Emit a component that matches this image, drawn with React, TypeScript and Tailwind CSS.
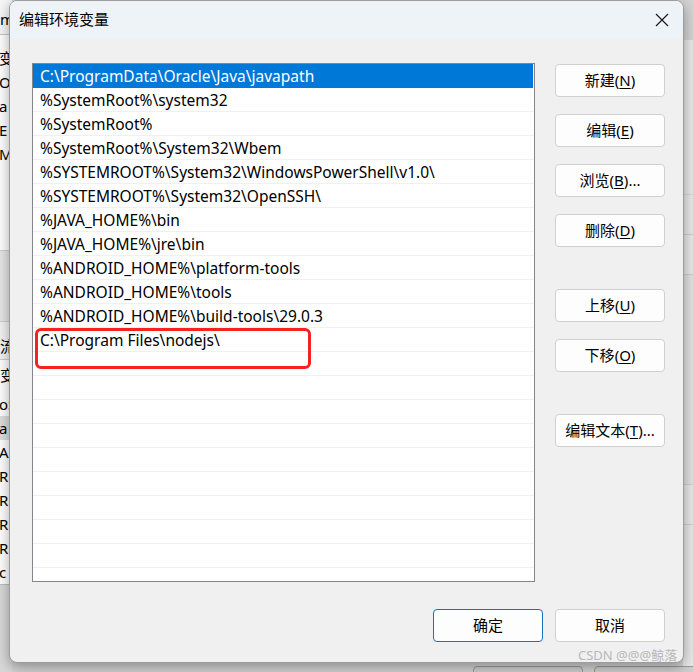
const FONT = '"Noto Sans", "Noto Sans CJK SC", sans-serif';

const paths = [
  "C:\\ProgramData\\Oracle\\Java\\javapath",
  "%SystemRoot%\\system32",
  "%SystemRoot%",
  "%SystemRoot%\\System32\\Wbem",
  "%SYSTEMROOT%\\System32\\WindowsPowerShell\\v1.0\\",
  "%SYSTEMROOT%\\System32\\OpenSSH\\",
  "%JAVA_HOME%\\bin",
  "%JAVA_HOME%\\jre\\bin",
  "%ANDROID_HOME%\\platform-tools",
  "%ANDROID_HOME%\\tools",
  "%ANDROID_HOME%\\build-tools\\29.0.3",
  "C:\\Program Files\\nodejs\\",
];

const emptyRows = 10;

function WinButton({ label, hotkey, tail, primary }: { label: string; hotkey?: string; tail?: string; primary?: boolean }) {
  return (
    <button
      className={
        "flex h-[33px] w-[110px] items-center justify-center rounded-[4px] border bg-[#fdfdfd] text-[15px] text-black " +
        (primary ? "border-[#1a6fc4]" : "border-[#d0d0d0]")
      }
    >
      {label}
      {hotkey ? (
        <span>
          (<span className="underline underline-offset-2">{hotkey}</span>){tail}
        </span>
      ) : null}
    </button>
  );
}

function BackgroundWindow() {
  const top = ["m", "变", "Or", "a", "E", "M"];
  const bottom = ["oS", "a", "A", "R", "R", "R", "R", "c"];
  return (
    <div className="flex h-full w-[12px] flex-col overflow-hidden text-[15px] text-black">
      <div className="h-[35px] border-b border-[#c8c8c8] bg-[#f7f7f7] pt-[9px] leading-[20px]">{top[0]}</div>
      <div className="flex h-[215px] flex-col bg-white pt-[11px]">
        {top.slice(1).map((t, i) => (
          <div key={i} className="-ml-[1px] h-[24px] leading-[24px]">{t}</div>
        ))}
      </div>
      <div className="h-[72px] border-y border-[#cfcfcf] bg-[#e6e6e6]" />
      <div className="h-[38px] border-b border-[#d0d0d0] bg-[#f3f3f3] pt-[12px] leading-[24px]">流</div>
      <div className="h-[28px] bg-white leading-[30px]">变</div>
      <div className="flex flex-col bg-white pt-[4px]">
        {bottom.map((t, i) => (
          <div key={i} className={"-ml-[1px] h-[24px] leading-[24px] " + (i === 1 ? "bg-[#dedede]" : "")}>
            {t}
          </div>
        ))}
      </div>
      <div className="flex-1 border-t border-[#bdbdbd] bg-[#d9d9d9]" />
    </div>
  );
}

export default function App() {
  return (
    <div className="relative h-[672px] w-[693px] overflow-hidden bg-[#d4d4d4]" style={{ fontFamily: FONT }}>
      <BackgroundWindow />

      {/* right strip of the window behind */}
      <div className="absolute right-0 top-[40px] flex h-[632px] w-[10px] flex-col bg-[#e9e9e9]">
        <div className="h-[155px] border-b border-[#d6d6d6]" />
        <div className="h-[40px] border-b border-[#cfcfcf]" />
        <div className="h-[40px] border-b border-[#cfcfcf]" />
        <div className="h-[210px] border-b border-[#cfcfcf] bg-[#e2e2e2]" />
        <div className="h-[40px] border-b border-[#cfcfcf]" />
        <div className="flex-1" />
      </div>

      {/* bottom strip buttons of the window behind */}
      <div className="absolute bottom-[-14px] left-[473px] h-[20px] w-[110px] rounded-[4px] border border-[#9a9a9a] bg-[#cfcfcf]" />
      <div className="absolute bottom-[-14px] left-[594px] h-[20px] w-[110px] rounded-[4px] border border-[#9a9a9a] bg-[#cfcfcf]" />

      {/* dialog */}
      <div className="absolute left-[9px] top-0 flex h-[663px] w-[675px] flex-col overflow-hidden rounded-[8px] border border-[#9c9c9c] bg-[#f0f0f0] shadow-[0_4px_14px_rgba(0,0,0,0.35)]">
        <div className="flex h-[37px] shrink-0 items-center justify-between bg-[#eef3f8] pl-[9px] pr-[12px]">
          <span className="text-[15px] text-black">编辑环境变量</span>
          <svg width="14" height="14" viewBox="0 0 14 14" className="mr-[2px]">
            <path d="M1 1 L13 13 M13 1 L1 13" stroke="#1a1a1a" strokeWidth="1.2" />
          </svg>
        </div>

        <div className="flex flex-col pl-[22px] pr-[18px] pt-[25px]">
          <div className="flex gap-[20px]">
            <div className="relative h-[519px] w-[503px] overflow-hidden border border-[#82868c] bg-white">
              {paths.map((p, i) => (
                <div
                  key={i}
                  className={
                    "h-[24px] whitespace-nowrap border-b pl-[7px] text-[15.5px] leading-[25px] " +
                    (i === 0
                      ? "mr-[1px] border-[#0078d7] bg-[#0078d7] text-white"
                      : "border-[#f0f0f0] text-black")
                  }
                >
                  {p}
                </div>
              ))}
              {Array.from({ length: emptyRows }).map((_, i) => (
                <div key={"e" + i} className="h-[24px] border-b border-[#f0f0f0]" />
              ))}
              <div className="absolute left-[2px] top-[264px] h-[41px] w-[276px] rounded-[6px] border-[3px] border-[#f42222]" />
            </div>

            <div className="mt-[1px] flex flex-col">
              <WinButton label="新建" hotkey="N" />
              <div className="mt-[17px]"><WinButton label="编辑" hotkey="E" /></div>
              <div className="mt-[17px]"><WinButton label="浏览" hotkey="B" tail="..." /></div>
              <div className="mt-[17px]"><WinButton label="删除" hotkey="D" /></div>
              <div className="mt-[42px]"><WinButton label="上移" hotkey="U" /></div>
              <div className="mt-[17px]"><WinButton label="下移" hotkey="O" /></div>
              <div className="mt-[42px]"><WinButton label="编辑文本" hotkey="T" tail="..." /></div>
            </div>
          </div>

          <div className="mt-[27px] flex justify-end gap-[12px]">
            <WinButton label="确定" primary />
            <WinButton label="取消" />
          </div>
        </div>
      </div>

      <div className="absolute left-[578px] top-[647px] text-[13px] leading-[16px] text-[#b8b8b8]">CSDN @@@鲸落</div>
    </div>
  );
}
